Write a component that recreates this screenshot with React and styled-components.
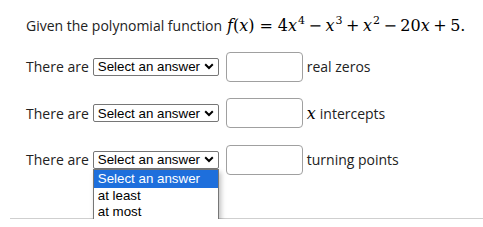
import React from "react";
import styled, { createGlobalStyle } from "styled-components";

const Global = createGlobalStyle`
  html, body { margin: 0; padding: 0; background: #fff; }
  body { font-family: "Open Sans", Lato, sans-serif; color: #222; }
`;

const Page = styled.div`
  padding: 0 0 0 10px;
`;

const Content = styled.div`
  padding: 14px 0 0 16px;
`;

const Title = styled.div`
  font-size: 14px;
  line-height: 24px;
  height: 24px;
  white-space: nowrap;
  display: flex;
  align-items: baseline;
`;

const MathExpr = styled.span`
  font-family: "DejaVu Serif", "Liberation Serif", serif;
  font-size: 16px;
  margin-left: 5px;
  color: #000;
  white-space: nowrap;
`;

const V = styled.span`
  font-family: "DejaVu Serif", serif;
  font-style: italic;
`;

const Sup = styled.sup`
  font-size: 11px;
  vertical-align: 7px;
  line-height: 0;
  margin-left: 1px;
`;

const Op = styled.span`
  margin: 0 ${(p) => p.$m || 3.5}px;
`;

const Rows = styled.div`
  margin-top: 13.5px;
  display: flex;
  flex-direction: column;
  gap: 16.5px;
`;

const Row = styled.div`
  display: flex;
  align-items: center;
  height: 30px;
  font-size: 14px;
  white-space: nowrap;
`;

const Label = styled.span`
  margin-right: 4px;
`;

const SelectWrap = styled.div`
  position: relative;
  display: flex;
`;

const Select = styled.div`
  box-sizing: border-box;
  width: 126px;
  height: 18px;
  border: 1px solid #767676;
  border-radius: 2px;
  font-family: "Liberation Sans", Arial, sans-serif;
  font-size: 13.33px;
  color: #000;
  display: flex;
  align-items: center;
  justify-content: space-between;
  padding: 0 4px 0 4px;
  background: #fff;
`;

const Chevron = () => (
  <svg width="10" height="7" viewBox="0 0 10 7">
    <path d="M1.2 1.3 L5 5 L8.8 1.3" fill="none" stroke="#000" strokeWidth="2" />
  </svg>
);

const Menu = styled.div`
  position: absolute;
  top: 18px;
  left: 0;
  width: 126px;
  box-sizing: border-box;
  border: 1px solid #767676;
  background: #fff;
  box-shadow: 2px 3px 5px rgba(0, 0, 0, 0.25);
  font-family: "Liberation Sans", Arial, sans-serif;
  font-size: 13.33px;
  color: #000;
  z-index: 5;
`;

const Option = styled.div`
  height: ${(p) => (p.$first ? 18 : 16)}px;
  line-height: ${(p) => (p.$first ? 18 : 16)}px;
  padding: 0 4px;
  background: ${(p) => (p.$active ? "#1e6fdc" : "transparent")};
  color: ${(p) => (p.$active ? "#fff" : "#000")};
`;

const Input = styled.div`
  box-sizing: border-box;
  width: 77px;
  height: 30px;
  border: 1px solid #a0a0a0;
  border-radius: 4px;
  margin: 0 4px 0 7px;
  background: #fff;
`;

const Rule = styled.div`
  margin-top: 43px;
  height: 1px;
  background: #cfcfcf;
`;

const Xi = styled.span`
  font-family: "DejaVu Serif", serif;
  font-style: italic;
  font-size: 16px;
  margin-right: 4px;
  color: #000;
`;

function Dropdown({ open }) {
  return (
    <SelectWrap>
      <Select>
        <span>Select an answer</span>
        <Chevron />
      </Select>
      {open && (
        <Menu>
          <Option $active $first>Select an answer</Option>
          <Option>at least</Option>
          <Option>at most</Option>
        </Menu>
      )}
    </SelectWrap>
  );
}

export default function App() {
  return (
    <Page>
      <Global />
      <Content>
        <Title>
          Given the polynomial function
          <MathExpr>
            <V>f</V>(<V>x</V>)<Op $m={5}>=</Op>4<V>x</V>
            <Sup>4</Sup>
            <Op>−</Op>
            <V>x</V>
            <Sup>3</Sup>
            <Op>+</Op>
            <V>x</V>
            <Sup>2</Sup>
            <Op>−</Op>20<V>x</V>
            <Op>+</Op>5.
          </MathExpr>
        </Title>
        <Rows>
          <Row>
            <Label>There are</Label>
            <Dropdown />
            <Input />
            <span>real zeros</span>
          </Row>
          <Row>
            <Label>There are</Label>
            <Dropdown />
            <Input />
            <Xi>x</Xi>
            <span>intercepts</span>
          </Row>
          <Row>
            <Label>There are</Label>
            <Dropdown open />
            <Input />
            <span>turning points</span>
          </Row>
        </Rows>
      </Content>
      <Rule />
    </Page>
  );
}
